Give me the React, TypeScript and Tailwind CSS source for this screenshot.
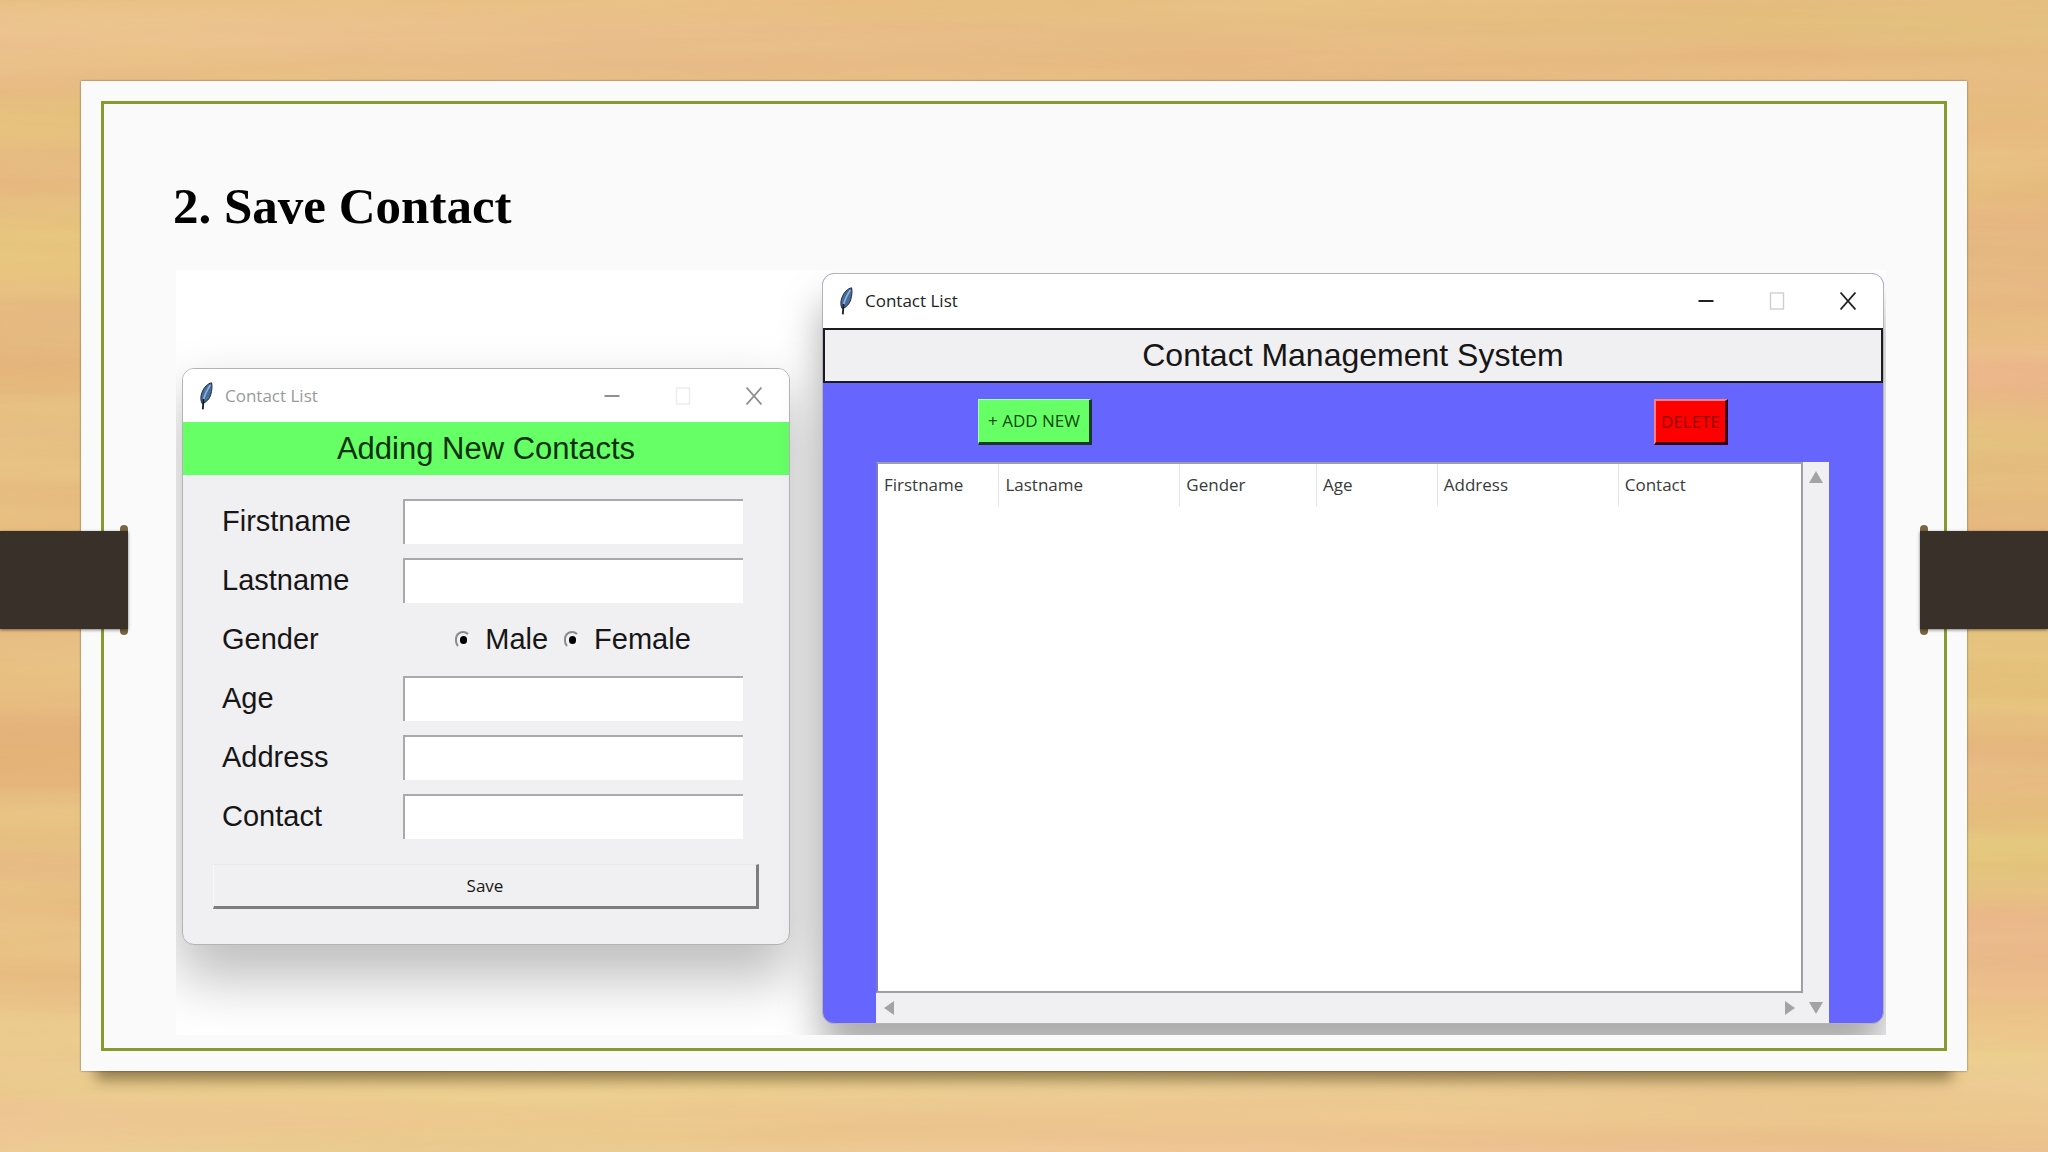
const COLUMNS = [
    { label: 'Firstname', width: 'w-[13.1%]' },
    { label: 'Lastname', width: 'w-[19.6%]' },
    { label: 'Gender', width: 'w-[14.8%]' },
    { label: 'Age', width: 'w-[13.1%]' },
    { label: 'Address', width: 'w-[19.6%]' },
    { label: 'Contact', width: 'w-[19.8%]' },
];

function Wood() {
    return (
        <svg className="absolute inset-0 h-full w-full" aria-hidden="true">
            <filter id="grain" x="0" y="0" width="100%" height="100%" colorInterpolationFilters="sRGB">
                <feTurbulence type="fractalNoise" baseFrequency="0.0006 0.01" numOctaves="6" seed="4" />
                <feColorMatrix values="0.08 0 0 0 0.875  0.06 0.17 0 0 0.65  0.12 0.04 0.08 0 0.41  0 0 0 0 1" />
            </filter>
            <linearGradient id="light" x1="0" x2="0" y1="0" y2="1">
                <stop offset="0" stopColor="#c87838" stopOpacity="0.08" />
                <stop offset="0.7" stopColor="#c87838" stopOpacity="0.08" />
                <stop offset="1" stopColor="#fff0d0" stopOpacity="0.15" />
            </linearGradient>
            <rect width="100%" height="100%" fill="#e9c384" />
            <rect width="100%" height="100%" filter="url(#grain)" />
            <rect width="100%" height="100%" fill="url(#light)" />
        </svg>
    );
}

function Feather() {
    return (
        <svg viewBox="0 0 14 28" className="h-7 w-3.5" aria-hidden="true">
            <path d="M12.6 0.8C9 1.4 5 5 3 10.4C1.4 14.6 1.4 18.6 3.2 21.6C7 20.6 10.6 17 11.8 12.4C12.9 8.4 13.4 4 12.6 0.8Z" fill="#466d9c" stroke="#1d2b40" />
            <path d="M11.4 3C8.4 7.4 5.6 13 4.6 18" fill="none" stroke="#8fb2d8" strokeWidth="1.6" />
            <path d="M4.6 17L3.8 27.4" fill="none" stroke="#181c26" strokeWidth="1.8" />
        </svg>
    );
}

function TitleBar({ active }: { active: boolean }) {
    return (
        <div className={`flex items-center bg-white pl-4 ${active ? 'h-[54px]' : 'h-[53px]'}`}>
            <Feather />
            <span className={`ml-3 flex-1 font-['Open_Sans',sans-serif] text-[17px] ${active ? 'text-[#222]' : 'text-[#9a9a9a]'}`}>Contact List</span>
            <div className={`flex h-full ${active ? 'text-[#222]' : 'text-[#8f8f8f]'}`}>
                <button aria-label="Minimize" className="flex w-[71px] items-center justify-center">
                    <svg viewBox="0 0 16 16" className="h-4 w-4"><path d="M0.5 8H15.5" stroke="currentColor" strokeWidth="1.8" /></svg>
                </button>
                <button aria-label="Maximize" disabled className={`flex w-[71px] items-center justify-center ${active ? 'text-[#cfcfcf]' : 'text-[#ececec]'}`}>
                    <svg viewBox="0 0 16 18" className="h-[18px] w-4"><rect x="1.5" y="1" width="13" height="16" fill="none" stroke="currentColor" strokeWidth="1.4" /></svg>
                </button>
                <button aria-label="Close" className="flex w-[71px] items-center justify-center">
                    <svg viewBox="0 0 16 18" className="h-[18px] w-4"><path d="M0.5 0.5L15.5 17.5M15.5 0.5L0.5 17.5" stroke="currentColor" strokeWidth="1.8" /></svg>
                </button>
            </div>
        </div>
    );
}

function TextRow({ label, id }: { label: string; id: string }) {
    return (
        <div className="flex items-center">
            <label htmlFor={id} className="w-[181px]">{label}</label>
            <input id={id} type="text" className="h-[45px] min-w-0 flex-1 border-t-2 border-l-2 border-[#a9a9ab] bg-white px-2 outline-none" />
        </div>
    );
}

function Radio({ id, label }: { id: string; label: string }) {
    return (
        <>
            <input
                id={id}
                name={id}
                type="radio"
                defaultChecked
                className="flex h-[18px] w-4 appearance-none items-center justify-center rounded-full border-2 border-t-[#8a8a8a] border-r-transparent border-b-transparent border-l-[#8a8a8a] bg-[#f3f2f4] checked:before:h-2 checked:before:w-[7px] checked:before:rounded-full checked:before:bg-black"
            />
            <label htmlFor={id} className="ml-3.5">{label}</label>
        </>
    );
}

function AddWindow() {
    return (
        <section className="mt-[98px] mb-[90px] overflow-hidden rounded-xl border border-[#b4b3b6] bg-[#f0eff1] shadow-[0_30px_56px_4px_rgba(0,0,0,0.26)]">
            <TitleBar active={false} />
            <h2 className="bg-[#66ff66] text-center text-[31px] leading-[53px] text-[#0c300c]">Adding New Contacts</h2>
            <form className="pt-6 pr-[30px] pl-[30px] text-[29px] leading-[45px] text-[#161616]">
                <div className="flex flex-col gap-3.5 pr-4 pl-[9px]">
                    <TextRow id="firstname" label="Firstname" />
                    <TextRow id="lastname" label="Lastname" />
                    <div className="flex items-center">
                        <span className="w-[181px]">Gender</span>
                        <div className="flex flex-1 items-center justify-center">
                            <Radio id="male" label="Male" />
                            <span className="w-4" />
                            <Radio id="female" label="Female" />
                        </div>
                    </div>
                    <TextRow id="age" label="Age" />
                    <TextRow id="address" label="Address" />
                    <TextRow id="contact" label="Contact" />
                </div>
                <button type="button" className="mt-[25px] block h-[45px] w-full border-t border-r-3 border-b-3 border-l border-t-[#e8e7e9] border-r-[#7d7d7f] border-b-[#7d7d7f] border-l-[#f8f8f8] font-['Open_Sans',sans-serif] text-[17px] leading-10">
                    Save
                </button>
            </form>
        </section>
    );
}

function Arrow({ label, d }: { label: string; d: string }) {
    return (
        <button aria-label={label} className="flex h-[30px] w-[26px] shrink-0 items-center justify-center">
            <svg viewBox="0 0 14 14" className="h-3.5 w-3.5"><path d={d} fill="#a3a3a5" /></svg>
        </button>
    );
}

function ListWindow() {
    return (
        <section className="mt-[3px] mb-[11px] flex flex-col overflow-hidden rounded-xl border border-[#b4b3b6] bg-[#6666ff] shadow-[0_30px_40px_0_rgba(0,0,0,0.34)]">
            <TitleBar active />
            <h2 className="border-2 border-[#1c1b22] bg-[#f0eff1] text-center text-[32px] leading-[51px] text-[#161616]">Contact Management System</h2>
            <div className="flex justify-between pt-4 pr-[155px] pl-[155px] font-['Open_Sans',sans-serif] text-[17px]">
                <button className="h-[46px] border-t border-r-3 border-b-3 border-l border-t-[#a6ffa6] border-r-[#173a2c] border-b-[#173a2c] border-l-[#a6ffa6] bg-[#66ff66] px-[9px] text-[#0f4a0f]">+ ADD NEW</button>
                <button className="h-[46px] border-t-2 border-r-3 border-b-3 border-l-2 border-t-[#ff8080] border-r-[#3a0018] border-b-[#3a0018] border-l-[#ff8080] bg-[#ff0000] px-[5px] text-[#8f0000]">DELETE</button>
            </div>
            <div className="mt-[17px] mr-[54px] ml-[53px] flex flex-1">
                <div className="flex min-w-0 flex-1 flex-col">
                    <div className="flex-1 border-2 border-[#9f9fa6] border-l-[#7a7ac8] bg-white">
                        <table className="w-full table-fixed border-collapse font-['Open_Sans',sans-serif] text-[17px] text-[#3a3a3a]">
                            <thead>
                                <tr>
                                    {COLUMNS.map((c) => (
                                        <th key={c.label} scope="col" className={`h-[42px] border-r border-[#e4e4e6] pl-1.5 text-left font-normal last:border-r-0 ${c.width}`}>{c.label}</th>
                                    ))}
                                </tr>
                            </thead>
                            <tbody />
                        </table>
                    </div>
                    <div className="flex h-[30px] justify-between bg-[#f0eff1]">
                        <Arrow label="Scroll left" d="M2 7L12 0V14Z" />
                        <Arrow label="Scroll right" d="M12 7L2 0V14Z" />
                    </div>
                </div>
                <div className="flex flex-col justify-between bg-[#f0eff1]">
                    <Arrow label="Scroll up" d="M7 1L14 13H0Z" />
                    <Arrow label="Scroll down" d="M7 13L14 1H0Z" />
                </div>
            </div>
        </section>
    );
}

function Band({ side }: { side: 'left' | 'right' }) {
    return (
        <div className={`absolute top-[531px] flex h-[98px] w-32 ${side === 'left' ? 'left-0 justify-end' : 'right-0'}`}>
            <span className="absolute -top-1.5 h-3 w-2 rounded-full bg-[#7a6640]" />
            <span className="absolute -bottom-1.5 h-3 w-2 rounded-full bg-[#7a6640]" />
            <div className="relative h-full w-full bg-[#3a302a] shadow-[0_1px_3px_rgba(0,0,0,0.5)]" />
        </div>
    );
}

export default function App() {
    return (
        <div className="relative flex min-h-screen flex-col p-[81px] font-['Liberation_Sans',sans-serif]">
            <Wood />
            {/* lifted paper shadow under the slide */}
            <div className="absolute right-[96px] bottom-[72px] left-[96px] h-8 bg-[#5a4a20]/60 blur-[7px]" />
            <main className="relative flex flex-1 flex-col bg-[#fafafb] p-5 shadow-[0_0_2px_rgba(0,0,0,0.5)]">
                <div className="flex flex-1 flex-col border-3 border-[#87992f] pt-[72px] pr-[58px] pb-[13px] pl-[69px]">
                    <h1 className="font-['Liberation_Serif',serif] text-[51px] leading-[60px] font-bold text-black">2. Save Contact</h1>
                    <div className="mt-[34px] ml-[3px] grid flex-1 grid-cols-[608fr_1062fr] gap-8 overflow-hidden bg-white pr-0.5 pl-1.5">
                        <AddWindow />
                        <ListWindow />
                    </div>
                </div>
            </main>
            <Band side="left" />
            <Band side="right" />
        </div>
    );
}
